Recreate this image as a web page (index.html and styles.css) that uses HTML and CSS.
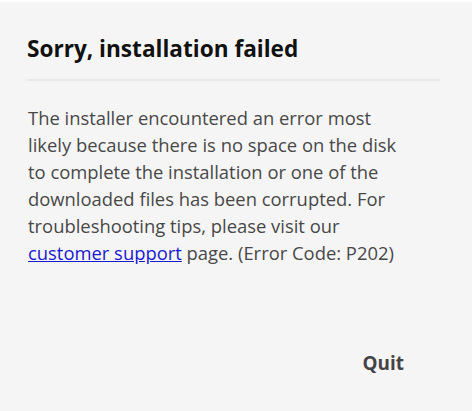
FILE: index.html
```html
<!DOCTYPE html>
<html lang="en">
<head>
    <meta charset="UTF-8">
    <title>Installation failed</title>
    <link rel="stylesheet" href="styles.css">
</head>
<body>
    <div class="dialog">
        <h1 class="titulo">Sorry, installation failed</h1>
        <p class="mensagem">The installer encountered an error most<br>likely because there is no space on the disk<br>to complete the installation or one of the<br>downloaded files has been corrupted. For<br>troubleshooting tips, please visit our<br><a href="#">customer support</a> page. (Error Code: P202)</p>
        <div class="acoes">
            <button class="botao-sair">Quit</button>
        </div>
    </div>
</body>
</html>
```
FILE: styles.css
```css
body {
    margin: 0;
    background: #ffffff;
    font-family: "Open Sans", sans-serif;
}
.dialog {
    box-sizing: border-box;
    width: 472px;
    height: 409px;
    margin-top: 2px;
    background: #f5f5f5;
    padding: 31px 32px 0 27px;
}
.titulo {
    margin: 0;
    font-size: 22.6px;
    font-weight: bold;
    color: #111111;
    padding-bottom: 15px;
    border-bottom: 2px solid #e9e9e9;
}
.mensagem {
    margin: 22.6px 0 0 1px;
    font-size: 18.4px;
    line-height: 27px;
    color: #484848;
    white-space: nowrap;
}
.mensagem a {
    color: #1a1ad0;
}
.acoes {
    display: flex;
    justify-content: flex-end;
    margin-top: 84.4px;
    padding-right: 36px;
}
.botao-sair {
    background: none;
    border: none;
    padding: 0;
    font-family: inherit;
    font-size: 18.9px;
    font-weight: bold;
    color: #444444;
}
```
